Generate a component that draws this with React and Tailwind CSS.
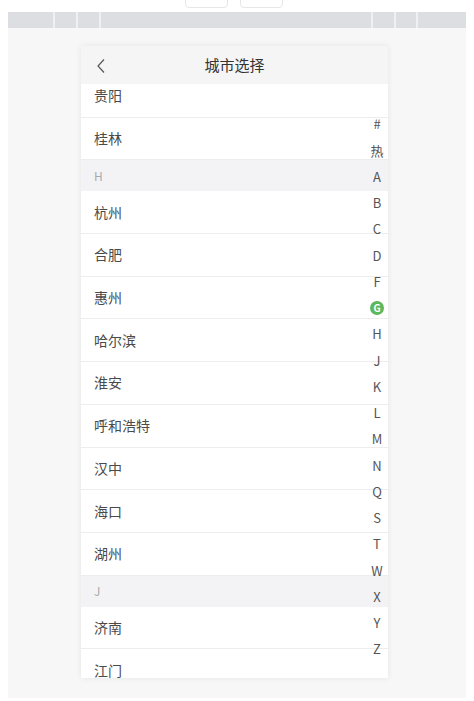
import React from "react";

const font = { fontFamily: '"Noto Sans CJK SC", "Noto Sans", sans-serif' };

// list as it stands after scrolling a bit past the G section
const rows = [
  { type: "city", name: "贵阳" },
  { type: "city", name: "桂林" },
  { type: "letter", name: "H" },
  { type: "city", name: "杭州" },
  { type: "city", name: "合肥" },
  { type: "city", name: "惠州" },
  { type: "city", name: "哈尔滨" },
  { type: "city", name: "淮安" },
  { type: "city", name: "呼和浩特" },
  { type: "city", name: "汉中" },
  { type: "city", name: "海口" },
  { type: "city", name: "湖州" },
  { type: "letter", name: "J" },
  { type: "city", name: "济南" },
  { type: "city", name: "江门" },
];

const indexKeys = ["#", "热", "A", "B", "C", "D", "F", "G", "H", "J", "K", "L", "M", "N", "Q", "S", "T", "W", "X", "Y", "Z"];

const App = () => {
  const active = "G";

  return (
    <div className="w-[474px] h-[701px] bg-white overflow-hidden" style={font}>
      {/* Browser-ish chrome */}
      <div className="h-[12px] relative">
        <div className="absolute left-[185px] top-[-4px] w-[43px] h-[12px] border border-[#e6e6e6] rounded-[4px]" />
        <div className="absolute left-[240px] top-[-4px] w-[43px] h-[12px] border border-[#e6e6e6] rounded-[4px]" />
      </div>
      <div className="mx-[8px] h-[16px] flex bg-[#dddee2]">
        <div className="w-[45px]" />
        <div className="w-[23px] border-l-2 border-[#f0f0f2]" />
        <div className="w-[23px] border-l-2 border-[#f0f0f2]" />
        <div className="w-[272px] border-l-2 border-[#f0f0f2]" />
        <div className="w-[23px] border-l-2 border-[#f0f0f2]" />
        <div className="w-[22px] border-l-2 border-[#f0f0f2]" />
        <div className="flex-1 border-l-2 border-[#f0f0f2]" />
      </div>

      {/* Page area */}
      <div className="mx-[8px] h-[670px] bg-[#f7f7f7] pt-[18px]">
        <div className="ml-[73px] w-[307px] h-[632px] bg-white shadow-[0_0_6px_rgba(0,0,0,0.08)] flex flex-col relative overflow-hidden">
          {/* Header */}
          <div className="h-[38px] shrink-0 bg-[#f5f5f5] flex items-center relative">
            <svg className="absolute left-[15px] top-[12px]" width="10" height="16" viewBox="0 0 10 16" fill="none">
              <polyline points="8,1.5 2,8 8,14.5" stroke="#555" strokeWidth="1.2" />
            </svg>
            <div className="w-full text-center text-[15px] text-[#333]">城市选择</div>
          </div>

          {/* List */}
          <div className="flex-1 overflow-hidden">
            <div className="-mt-[9px]">
              {rows.map((r, i) =>
                r.type === "letter" ? (
                  <div key={i} className="h-[31px] bg-[#f3f3f6] flex items-center pl-[13px] text-[12px] text-[#aaa]">
                    {r.name}
                  </div>
                ) : (
                  <div key={i} className="h-[42.7px] border-b border-[#ededed] flex items-center pl-[13px] text-[14px] text-[#4a4a4a]">
                    {r.name}
                  </div>
                )
              )}
            </div>
          </div>

          {/* Alphabet index */}
          <div className="absolute right-0 top-[65px] w-[22px] flex flex-col items-center">
            {indexKeys.map((k) => (
              <div key={k} className="h-[26.25px] flex items-center justify-center text-[13px] text-[#555]">
                {k === active ? (
                  <span className="w-[14px] h-[14px] rounded-full bg-[#5cb85c] text-white text-[10px] font-bold flex items-center justify-center">
                    {k}
                  </span>
                ) : (
                  k
                )}
              </div>
            ))}
          </div>
        </div>
      </div>
    </div>
  );
};

export default App;
